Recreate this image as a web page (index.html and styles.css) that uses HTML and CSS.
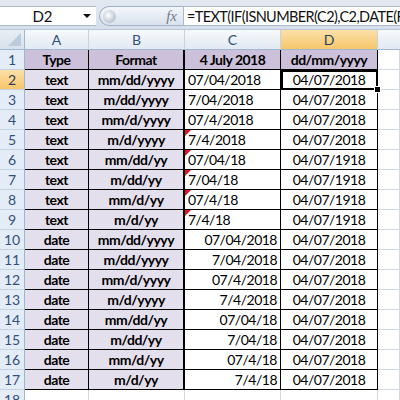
FILE: index.html
```html
<!DOCTYPE html>
<html>
	<head>
		<title>Date formats</title>
		<link rel="stylesheet" href="styles.css">
	</head>

	<body>
		<div class="formulabar">
			<div class="namebox">
				<span class="cellref">D2</span>
				<span class="dropdown"></span>
			</div>
			<div class="fxbox">
				<span class="knob"></span>
				<span class="fx">fx</span>
			</div>
			<div class="formula">=TEXT(IF(ISNUMBER(C2),C2,DATE(RIGHT(C2,2)+2000,LEFT(C2,2),MID(C2,4,2))),"dd/mm/yyyy")</div>
		</div>

		<div id="sheet" class="sheet"></div>

		<script>
			// type, format, value in C, result in D
			var rows = [
				['text', 'mm/dd/yyyy', '07/04/2018', '04/07/2018'],
				['text', 'm/dd/yyyy', '7/04/2018', '04/07/2018'],
				['text', 'mm/d/yyyy', '07/4/2018', '04/07/2018'],
				['text', 'm/d/yyyy', '7/4/2018', '04/07/2018'],
				['text', 'mm/dd/yy', '07/04/18', '04/07/1918'],
				['text', 'm/dd/yy', '7/04/18', '04/07/1918'],
				['text', 'mm/d/yy', '07/4/18', '04/07/1918'],
				['text', 'm/d/yy', '7/4/18', '04/07/1918'],
				['date', 'mm/dd/yyyy', '07/04/2018', '04/07/2018'],
				['date', 'm/dd/yyyy', '7/04/2018', '04/07/2018'],
				['date', 'mm/d/yyyy', '07/4/2018', '04/07/2018'],
				['date', 'm/d/yyyy', '7/4/2018', '04/07/2018'],
				['date', 'mm/dd/yy', '07/04/18', '04/07/2018'],
				['date', 'm/dd/yy', '7/04/18', '04/07/2018'],
				['date', 'mm/d/yy', '07/4/18', '04/07/2018'],
				['date', 'm/d/yy', '7/4/18', '04/07/2018']
			];

			var out = '';
			out += '<div class="corner"><span class="tri"></span></div>';
			out += '<div class="colhead">A</div><div class="colhead">B</div><div class="colhead">C</div>';
			out += '<div class="colhead active">D</div><div class="colhead last"></div>';

			out += '<div class="rowhead">1</div>';
			out += '<div class="cell title colA">Type</div>';
			out += '<div class="cell title colB">Format</div>';
			out += '<div class="cell title colC">4 July 2018</div>';
			out += '<div class="cell title colD">dd/mm/yyyy</div>';
			out += '<div class="cell blank"></div>';

			for (var i = 0; i < rows.length; i++) {
				var r = rows[i];
				var n = i + 2;
				var c = 'cell colC ' + (r[0] == 'text' ? 'left' : 'right');
				// two digit years stored as text get the error flag
				if (r[0] == 'text' && r[2].length < 9) c += ' flag';
				out += '<div class="rowhead' + (n == 2 ? ' active' : '') + '">' + n + '</div>';
				out += '<div class="cell fill colA">' + r[0] + '</div>';
				out += '<div class="cell fill colB">' + r[1] + '</div>';
				out += '<div class="' + c + '">' + r[2] + '</div>';
				out += '<div class="cell colD' + (n == 2 ? ' sel' : '') + '">' + r[3] + '</div>';
				out += '<div class="cell blank"></div>';
			}

			out += '<div class="rowhead">18</div>';
			out += '<div class="cell blank"></div><div class="cell blank"></div><div class="cell blank"></div><div class="cell blank"></div><div class="cell blank"></div>';

			document.getElementById('sheet').innerHTML = out;
		</script>
	</body>
</html>
```

FILE: styles.css
```css
body {
	margin: 0;
	background-color: white;
	font-family: Lato, "Liberation Sans", sans-serif;
	overflow: hidden;
}

/* formula bar across the top */

div.formulabar {
	height: 30px;
	display: flex;
	box-sizing: border-box;
	padding: 6px 0 3px 0;
	background: linear-gradient(#e3e9f1, #d6dfea);
	border-bottom: 1px solid #b7c6d8;
}

div.namebox {
	width: 96px;
	background-color: white;
	border-top: 1px solid #aab9cc;
	border-bottom: 1px solid #aab9cc;
	display: flex;
	align-items: center;
	font-size: 15px;
	color: #111;
}

span.cellref {
	flex: 1;
	text-align: center;
	padding-left: 2px;
}

span.dropdown {
	width: 0;
	height: 0;
	margin-right: 5px;
	border-left: 4px solid transparent;
	border-right: 4px solid transparent;
	border-top: 4px solid #111;
}

div.fxbox {
	width: 84px;
	margin-left: 3px;
	border: 1px solid #9fb1c7;
	border-right: none;
	border-radius: 11px 0 0 11px;
	background: linear-gradient(#f4f7fb, #d9e2ed);
	display: flex;
	align-items: center;
	justify-content: space-between;
	padding: 0 6px 0 3px;
	box-sizing: border-box;
}

span.knob {
	width: 13px;
	height: 13px;
	border-radius: 50%;
	background: radial-gradient(circle at 40% 40%, #ffffff, #b9c3cf 70%);
}

span.fx {
	font-family: "Liberation Serif", serif;
	font-style: italic;
	font-size: 15px;
	color: #6f7a88;
}

div.formula {
	flex: 1;
	background-color: white;
	border: 1px solid #aab9cc;
	border-right: none;
	padding-left: 3px;
	font-size: 14.5px;
	letter-spacing: -0.6px;
	line-height: 19px;
	white-space: nowrap;
	overflow: hidden;
	color: #111;
}

/* the worksheet grid */

div.sheet {
	display: grid;
	grid-template-columns: 25px 64px 96px 96px 97px 1fr;
	grid-auto-rows: 20px;
	font-size: 14px;
	letter-spacing: -0.5px;
}

div.corner,
div.colhead,
div.rowhead {
	box-sizing: border-box;
	display: flex;
	align-items: center;
	justify-content: center;
	color: #33507a;
	font-size: 14px;
	letter-spacing: 0;
}

div.corner {
	background: linear-gradient(#e9eef5, #d8e1ec);
	border-right: 1px solid #9eb6ce;
	border-bottom: 1px solid #9eb6ce;
	position: relative;
}

span.tri {
	position: absolute;
	right: 3px;
	bottom: 3px;
	width: 0;
	height: 0;
	border-left: 13px solid transparent;
	border-bottom: 13px solid #bccbdc;
}

div.colhead {
	background: linear-gradient(#f7f9fc, #e2e9f2);
	border-right: 1px solid #c5d2e0;
	border-bottom: 1px solid #9eb6ce;
}

div.colhead.last {
	border-right: none;
}

div.rowhead {
	background-color: #e4ecf7;
	border-right: 1px solid #9eb6ce;
	border-bottom: 1px solid #c5d2e0;
}

div.colhead.active,
div.rowhead.active {
	background: linear-gradient(#fbe0a8, #f6c66b);
	color: #2b3f5c;
}

div.cell {
	box-sizing: border-box;
	border-right: 1px solid #000;
	border-bottom: 1px solid #000;
	padding: 0 3px;
	white-space: nowrap;
	color: #000;
	line-height: 19px;
	position: relative;
}

div.cell.blank {
	border-right: 1px solid #d0d7e5;
	border-bottom: 1px solid #d0d7e5;
}

div.cell.title {
	background-color: #ccc0da;
	font-weight: bold;
	text-align: center;
}

div.cell.fill {
	background-color: #e4dfec;
	font-weight: bold;
	text-align: center;
}

div.colB {
	border-right: 2px solid #000;
}

div.colD {
	text-align: center;
}

div.left {
	text-align: left;
}

div.right {
	text-align: right;
}

/* little red triangle for numbers stored as text */
div.flag::before {
	content: '';
	position: absolute;
	left: 0;
	top: 0;
	border-top: 6px solid #e0161b;
	border-right: 6px solid transparent;
}

div.sel {
	outline: 2px solid #000;
	outline-offset: -2px;
}

div.sel::after {
	content: '';
	position: absolute;
	right: -4px;
	bottom: -4px;
	width: 5px;
	height: 5px;
	background-color: #000;
	border: 1px solid white;
	z-index: 2;
}
```
